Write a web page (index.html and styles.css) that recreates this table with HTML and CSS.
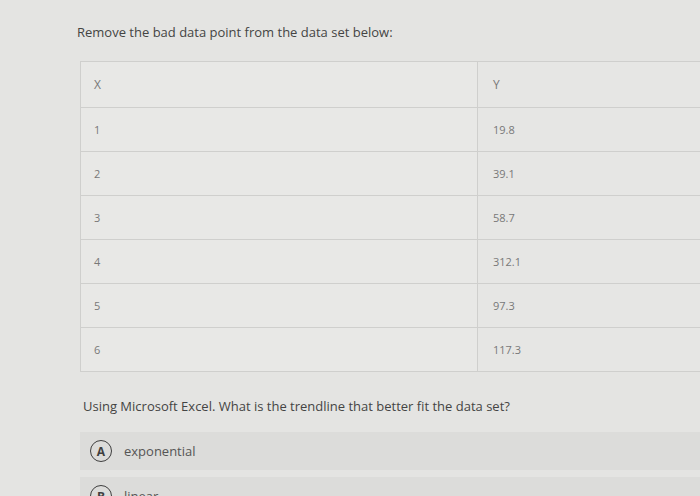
FILE: index.html
```html
<!DOCTYPE html>
<html>
<head>
<meta charset="utf-8">
<link rel="stylesheet" href="styles.css">
</head>
<body>
<div class="page">
  <p class="title">Remove the bad data point from the data set below:</p>
  <table class="data">
    <tr class="head"><td class="cx">X</td><td class="cy">Y</td></tr>
    <tr><td class="cx">1</td><td class="cy">19.8</td></tr>
    <tr><td class="cx">2</td><td class="cy">39.1</td></tr>
    <tr><td class="cx">3</td><td class="cy">58.7</td></tr>
    <tr><td class="cx">4</td><td class="cy">312.1</td></tr>
    <tr><td class="cx">5</td><td class="cy">97.3</td></tr>
    <tr><td class="cx">6</td><td class="cy">117.3</td></tr>
  </table>
  <p class="question">Using Microsoft Excel. What is the trendline that better fit the data set?</p>
  <div class="options">
    <div class="option"><span class="badge">A</span><span class="label">exponential</span></div>
    <div class="option"><span class="badge">B</span><span class="label">linear</span></div>
  </div>
</div>
</body>
</html>
```
FILE: styles.css
```css
html, body {
  margin: 0;
  padding: 0;
  background: #e4e4e2;
  overflow: hidden;
}
.page {
  width: 700px;
  height: 496px;
  font-family: "Open Sans", sans-serif;
  color: #454545;
  overflow: hidden;
}
.title {
  margin: 0;
  padding: 23px 0 0 77px;
  font-size: 13px;
  line-height: 18px;
  color: #444;
}
.data {
  margin: 20px 0 0 80px;
  border-collapse: collapse;
  width: 640px;
  background: #e8e8e6;
}
.data td {
  border: 1px solid #cfcfcd;
  height: 43px;
  padding: 0;
  font-size: 11px;
  color: #787878;
  vertical-align: middle;
}
.data tr.head td {
  height: 45px;
  font-size: 12px;
}
.data td.cx {
  width: 383px;
  padding-left: 13px;
}
.data td.cy {
  padding-left: 15px;
  background: #e6e6e4;
}
.question {
  margin: 0;
  padding: 25px 0 0 83px;
  font-size: 13px;
  line-height: 18px;
  color: #444;
}
.options {
  margin: 17px 0 0 80px;
  display: flex;
  flex-direction: column;
  gap: 7px;
}
.option {
  height: 38px;
  background: #dcdcda;
  display: flex;
  align-items: center;
  padding-left: 10px;
}
.badge {
  width: 20px;
  height: 20px;
  border: 1.5px solid #3f3f3f;
  border-radius: 50%;
  display: flex;
  align-items: center;
  justify-content: center;
  font-size: 12px;
  font-weight: 700;
  color: #3f3f3f;
}
.label {
  margin-left: 12px;
  font-size: 13px;
  color: #555;
}
```
